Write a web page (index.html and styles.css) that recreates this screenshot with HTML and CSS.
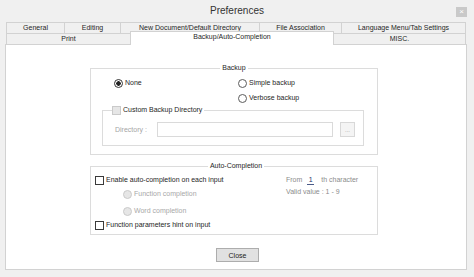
FILE: index.html
```html
<!DOCTYPE html>
<html lang="en">
<head>
    <meta charset="UTF-8">
    <title>Preferences</title>
    <link rel="stylesheet" href="styles.css">
</head>
<body>
    <div class="window">
        <div class="titlebar">
            <span></span>
            <span class="title">Preferences</span>
            <span class="close-x">&#215;</span>
        </div>

        <div class="tabs">
            <div class="tab-row back">
                <span class="tab w-general">General</span>
                <span class="tab w-editing">Editing</span>
                <span class="tab w-newdoc">New Document/Default Directory</span>
                <span class="tab w-assoc">File Association</span>
                <span class="tab w-lang">Language Menu/Tab Settings</span>
            </div>
            <div class="tab-row front">
                <span class="tab w-print">Print</span>
                <span class="tab w-backup active">Backup/Auto-Completion</span>
                <span class="tab w-misc">MISC.</span>
            </div>
        </div>

        <div class="panel">
            <fieldset class="group backup">
                <legend>Backup</legend>
                <div class="backup-options">
                    <label class="opt"><input type="radio" name="bk" checked> None</label>
                    <div class="opt-col">
                        <label class="opt"><input type="radio" name="bk"> Simple backup</label>
                        <label class="opt"><input type="radio" name="bk"> Verbose backup</label>
                    </div>
                </div>

                <fieldset class="group sub">
                    <legend><label class="opt"><input type="checkbox" disabled> Custom Backup Directory</label></legend>
                    <div class="dir-row">
                        <span class="dir-label">Directory :</span>
                        <input type="text" class="dir-input" disabled>
                        <button class="browse" disabled>...</button>
                    </div>
                </fieldset>
            </fieldset>

            <fieldset class="group auto">
                <legend>Auto-Completion</legend>
                <div class="auto-body">
                    <div class="auto-left">
                        <label class="opt"><input type="checkbox"> Enable auto-completion on each input</label>
                        <label class="opt sub-opt disabled"><input type="radio" name="ac" disabled> Function completion</label>
                        <label class="opt sub-opt disabled word"><input type="radio" name="ac" disabled> Word completion</label>
                        <label class="opt"><input type="checkbox"> Function parameters hint on input</label>
                    </div>
                    <div class="auto-right">
                        <div>From <span class="num">1</span> th character</div>
                        <div>Valid value : 1 - 9</div>
                    </div>
                </div>
            </fieldset>

            <div class="footer">
                <button class="close-btn">Close</button>
            </div>
        </div>
    </div>
</body>
</html>
```

FILE: styles.css
```css
body {
    margin: 0;
    background-color: #f0f0f0;
    font-family: 'Liberation Sans', Arial, sans-serif;
    font-size: 7px;
    line-height: 10px;
    color: #262626;
}

.window {
    width: 474px;
    height: 277px;
    box-sizing: border-box;
    background: #f0f0f0;
}

.titlebar {
    height: 20px;
    display: grid;
    grid-template-columns: 1fr auto 1fr;
    align-items: center;
}

.title {
    font-size: 10px;
    color: #333;
    padding-top: 2px;
}

.close-x {
    justify-self: end;
    width: 11px;
    height: 10px;
    margin-right: 7px;
    margin-top: 4px;
    background: #c9c9c9;
    color: white;
    font-size: 8px;
    line-height: 10px;
    text-align: center;
}

.tabs {
    margin-top: 2px;
    padding-left: 6px;
}

.tab-row {
    display: flex;
    align-items: flex-end;
}

.tab {
    box-sizing: border-box;
    height: 11px;
    line-height: 10px;
    text-align: center;
    background: #f0f0f0;
    border: 1px solid #d2d2d2;
    border-right: none;
    white-space: nowrap;
}

.tab:last-child {
    border-right: 1px solid #d2d2d2;
}

.back .tab {
    border-bottom: none;
}

.front .tab {
    height: 11px;
    border-bottom: none;
}

.tab.active {
    position: relative;
    z-index: 1;
    height: 14px;
    margin-top: -2px;
    margin-bottom: -1px;
    background: white;
    border: 1px solid #d2d2d2;
    border-bottom: none;
    line-height: 9px;
}

.tab.active + .tab {
    border-left: none;
}

.w-general { width: 58px; }
.w-editing { width: 56px; }
.w-newdoc { width: 139px; }
.w-assoc { width: 82px; }
.w-lang { width: 125px; }
.w-print { width: 124px; }
.w-backup { width: 204px; }
.w-misc { width: 132px; }

.panel {
    box-sizing: border-box;
    width: 462px;
    height: 226px;
    margin-left: 5px;
    background: white;
    border: 1px solid #d2d2d2;
}

.group {
    margin: 0;
    padding: 0;
    border: 1px solid #dcdcdc;
    min-width: 0;
}

.group legend {
    padding: 0 2px;
    margin: 0 auto;
    line-height: 10px;
}

.backup {
    box-sizing: border-box;
    width: 288px;
    margin: 18px 0 0 84px;
    padding: 5px 0 8px 0;
}

.backup-options {
    display: grid;
    grid-template-columns: 124px auto;
    padding-left: 23px;
}

.opt-col {
    display: flex;
    flex-direction: column;
    gap: 5px;
}

.opt {
    display: flex;
    align-items: center;
    gap: 2px;
    height: 10px;
    white-space: nowrap;
}

.opt input {
    appearance: none;
    margin: 0;
    width: 9px;
    height: 9px;
    box-sizing: border-box;
    border: 1px solid #3a3a3a;
    background: white;
    flex: none;
}

.opt input[type="radio"] {
    border-radius: 50%;
    border-color: #5c5c5c;
}

.opt input[type="radio"]:checked {
    border-color: #333;
    background: radial-gradient(circle, #222 0 2px, white 2.5px);
}

.opt input:disabled {
    background: #e6e6e6;
    border-color: #cacaca;
}

.sub {
    box-sizing: border-box;
    width: 262px;
    margin: 2px 0 0 11px;
    padding: 7px 0 8px 12px;
}

.sub legend {
    margin: 0 0 0 -3px;
    padding: 0 2px 0 0;
}

.dir-row {
    display: flex;
    align-items: center;
    height: 15px;
}

.dir-label {
    width: 42px;
    color: #a5a5a5;
}

.dir-input {
    box-sizing: border-box;
    width: 176px;
    height: 15px;
    margin: 0;
    border: 1px solid #dadada;
    background: white;
}

.browse {
    box-sizing: border-box;
    width: 15px;
    height: 15px;
    margin-left: 7px;
    padding: 0;
    border: 1px solid #d8d8d8;
    background: #f4f4f4;
    color: #9a9a9a;
    font-size: 6px;
    font-family: inherit;
}

.auto {
    box-sizing: border-box;
    width: 288px;
    margin: 6px 0 0 84px;
    padding: 4px 0 4px 4px;
}

.auto-body {
    display: flex;
}

.auto-left {
    width: 191px;
    display: flex;
    flex-direction: column;
    gap: 4px;
}

.sub-opt {
    margin-left: 28px;
}

.word {
    margin-top: 3px;
}

.disabled {
    color: #a8a8a8;
}

.auto-right {
    display: flex;
    flex-direction: column;
    gap: 2px;
    color: #8c8c8c;
}

.num {
    display: inline-block;
    width: 7px;
    margin: 0 5px 0 3px;
    text-align: center;
    color: #1c2f6a;
    border-bottom: 1px solid #4a5a88;
    line-height: 8px;
}

.footer {
    display: flex;
    justify-content: center;
    margin-top: 13px;
}

.close-btn {
    box-sizing: border-box;
    width: 43px;
    height: 14px;
    margin-left: 3px;
    padding: 0;
    font-family: inherit;
    font-size: 7px;
    color: #222;
    background: #e1e1e1;
    border: 1px solid #adadad;
}
```
